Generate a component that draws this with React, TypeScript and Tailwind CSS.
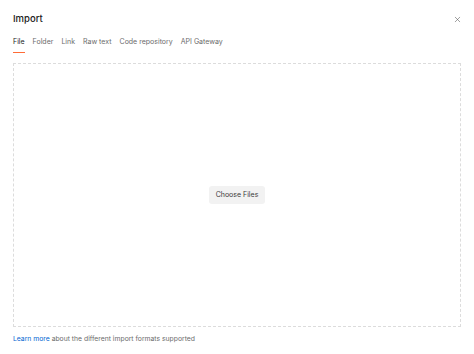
import { X } from "lucide-react";

const tabs = ["File", "Folder", "Link", "Raw text", "Code repository", "API Gateway"];

export default function App() {
  return (
    <div className="w-[474px] h-[354px] bg-white flex flex-col px-[13px] font-['Inter',sans-serif] text-[#212121]">
      <div className="flex items-center justify-between h-[37px] pt-[1px]">
        <h2 className="text-[9.5px] font-medium">Import</h2>
        <button className="text-[#5a5a5a] -mr-[1px]">
          <X className="w-[9px] h-[9px]" strokeWidth={1.5} />
        </button>
      </div>

      <div className="flex gap-[8px] h-[17px] text-[7px] text-[#6b6b6b]">
        {tabs.map((t, i) => (
          <div key={t} className="flex flex-col">
            <span className={i === 0 ? "text-[#212121]" : ""}>{t}</span>
            {i === 0 && <div className="mt-[4px] h-[1px] bg-[#ff6c37]" />}
          </div>
        ))}
      </div>

      <div className="mt-[9px] h-[264px] border border-dashed border-[#dcdcdc] flex items-center justify-center">
        <button className="h-[18px] px-[7px] rounded-[3px] bg-[#f2f2f2] text-[7px] text-[#3b3b3b]">
          Choose Files
        </button>
      </div>

      <p className="mt-[7px] text-[6.8px] text-[#6b6b6b]">
        <span className="text-[#0265d2]">Learn more</span> about the different import formats supported
      </p>
    </div>
  );
}
